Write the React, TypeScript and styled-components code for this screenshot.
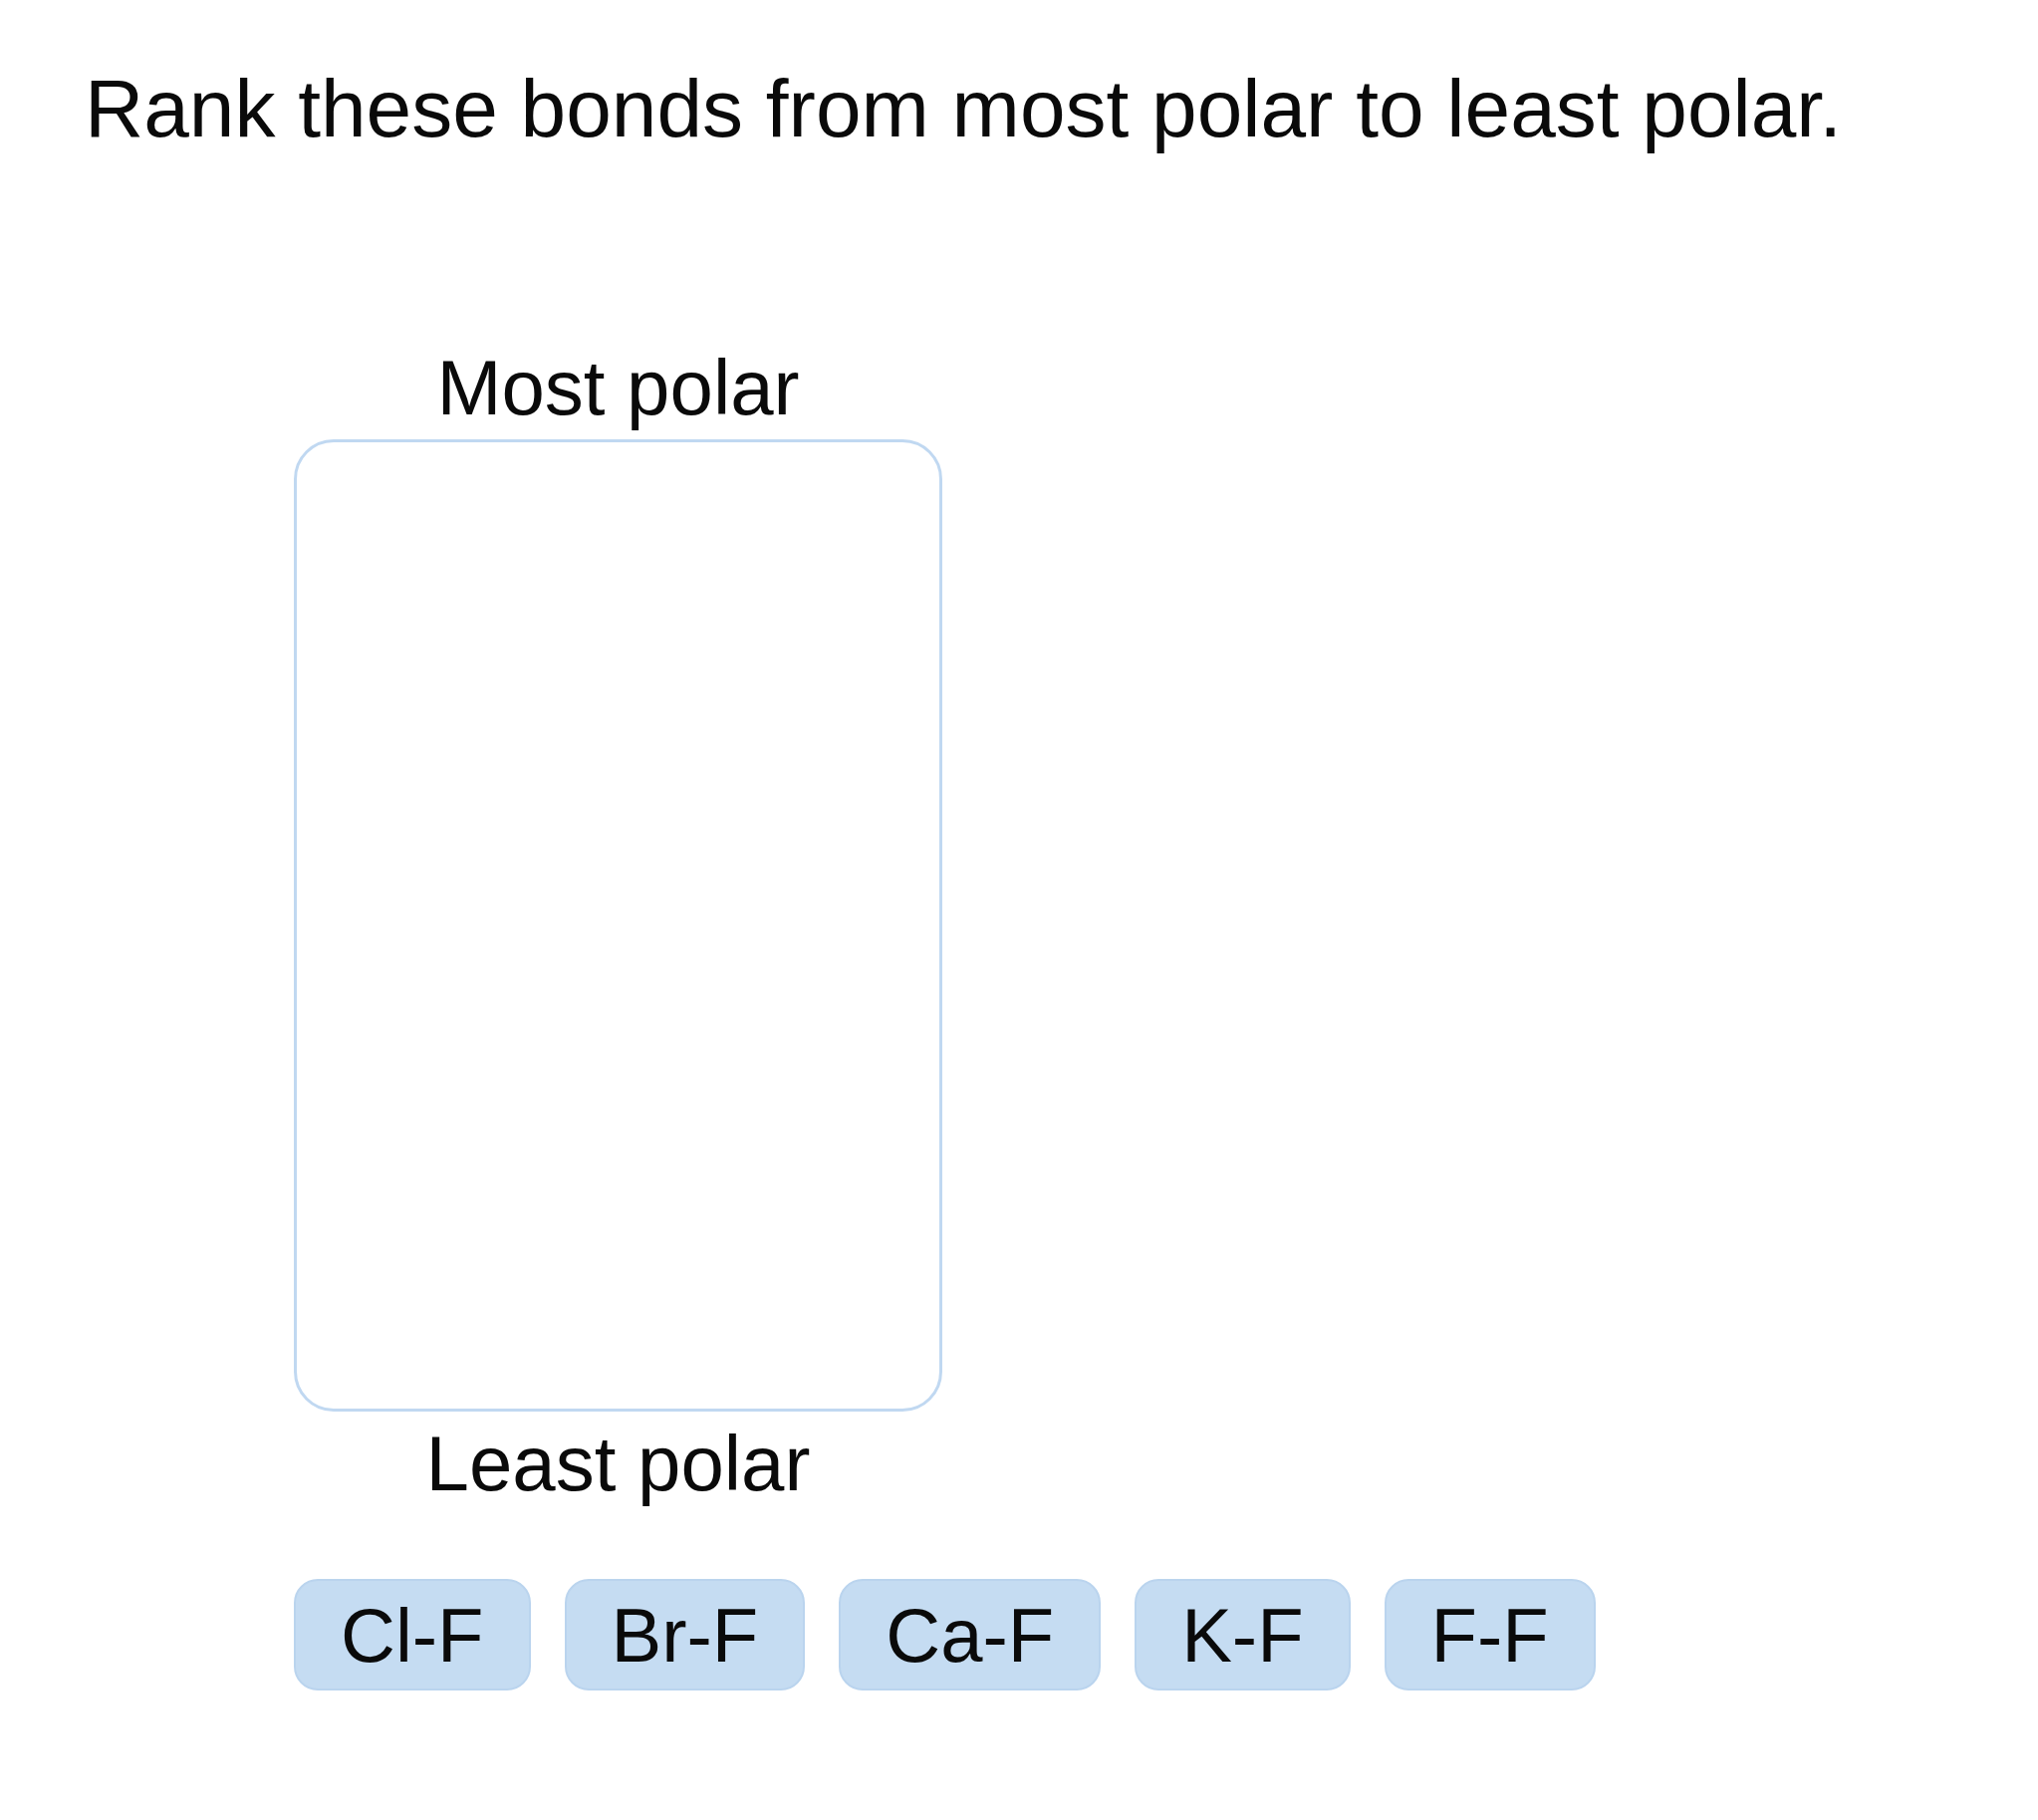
import React from 'react';
import styled, { createGlobalStyle } from 'styled-components';

const bonds = ['Cl-F', 'Br-F', 'Ca-F', 'K-F', 'F-F'];

const GlobalStyle = createGlobalStyle`
  body {
    margin: 0;
    background: #fff;
    font-family: "Liberation Sans", Arial, Helvetica, sans-serif;
    color: #0a0a0a;
  }
`;

const App = () => {
  return (
    <Page>
      <GlobalStyle />
      <Prompt>Rank these bonds from most polar to least polar.</Prompt>
      <Board>
        <Ranking>
          <Label>Most polar</Label>
          <DropZone />
          <Label>Least polar</Label>
        </Ranking>
        <Bank>
          {bonds.map((b) => (
            <Chip key={b}>{b}</Chip>
          ))}
        </Bank>
      </Board>
    </Page>
  );
};

export default App;

const Page = styled.div`
  padding: 63px 0 0 85px;
`;

const Prompt = styled.p`
  margin: 0;
  font-size: 82px;
  line-height: 92px;
`;

const Board = styled.div`
  margin: 189px 0 0 210px;
`;

const Ranking = styled.div`
  width: 651px;
  display: flex;
  flex-direction: column;
  align-items: center;
  gap: 7px;
`;

const Label = styled.div`
  font-size: 78px;
  line-height: 90px;
`;

const DropZone = styled.div`
  box-sizing: border-box;
  width: 651px;
  height: 976px;
  border: 3px solid #c0d8f1;
  border-radius: 40px;
`;

const Bank = styled.div`
  display: flex;
  gap: 34px;
  margin-top: 71px;
`;

const Chip = styled.div`
  box-sizing: border-box;
  height: 112px;
  padding: 0 45px;
  display: flex;
  align-items: center;
  font-size: 76px;
  background-color: #c5dcf2;
  border: 2px solid #bad4ee;
  border-radius: 24px;
`;
